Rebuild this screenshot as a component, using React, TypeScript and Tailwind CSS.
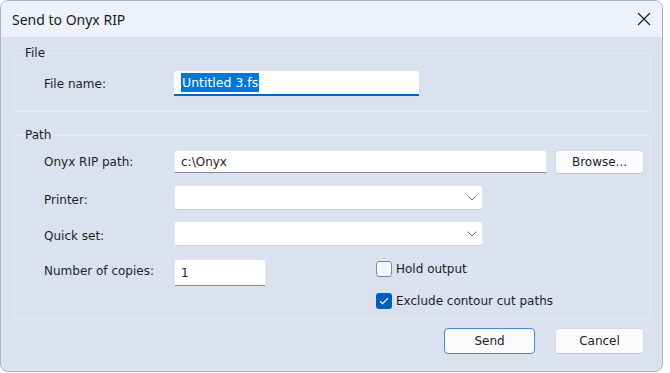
import React from "react";

const Chevron = () => (
  <svg width="10" height="6" viewBox="0 0 10 6" className="block">
    <path d="M0.5 0.5 L5 5 L9.5 0.5" fill="none" stroke="#6e727a" strokeWidth="1" />
  </svg>
);

const Combo = () => (
  <div className="w-[309px] h-[25px] bg-white border border-[#e2e5ec] border-b-[#cdd0d7] rounded-[3px] flex items-center justify-end pr-[5px]">
    <Chevron />
  </div>
);

export default function App() {
  return (
    <div className="w-[670px] h-[373px] bg-white font-['DejaVu_Sans',sans-serif] text-[12px] text-[#1e1e1e]">
      <div className="w-[663px] h-[372px] border border-[#aeb2ba] rounded-[8px] bg-[#dce1ef] overflow-hidden flex flex-col">
        <div className="h-[36px] shrink-0 bg-[#eef1f9] flex items-center justify-between pl-[11px] pr-[11px]">
          <span className="font-['Noto_Sans',sans-serif] text-[14px] text-[#1a1a1a]">Send to Onyx RIP</span>
          <svg width="14" height="14" viewBox="0 0 14 14" className="block">
            <path d="M1 1 L13 13 M13 1 L1 13" stroke="#1a1a1a" strokeWidth="1.1" fill="none" />
          </svg>
        </div>
        <div className="pl-[13px] pr-[11px] pt-[8px] flex flex-col">
          <fieldset className="border border-[#e7eaf3] rounded-[2px] pt-[10px] pb-[15px]">
            <legend className="ml-[10px] leading-[16px]">File</legend>
            <div className="flex items-center h-[25px] pl-[29px]">
              <div className="w-[130px]">File name:</div>
              <div className="w-[245px] h-[25px] bg-white rounded-t-[3px] border-b-2 border-[#0067c0] flex items-center pl-[7px]">
                <span className="bg-[#0078d7] text-white leading-[19px] px-[1px] text-[12.5px]">Untitled 3.fs</span>
              </div>
            </div>
          </fieldset>

          <fieldset className="mt-[15px] border border-[#e7eaf3] rounded-[2px] pt-[7px] pb-[7px]">
            <legend className="ml-[10px] leading-[16px]">Path</legend>
            <div className="pl-[29px]">
              <div className="flex items-center h-[24px]">
                <div className="w-[130px]">Onyx RIP path:</div>
                <div className="w-[373px] h-[23px] self-start bg-white rounded-t-[3px] border border-[#e4e7ee] border-b-[#868a93] flex items-center pl-[6px]">
                  c:\Onyx
                </div>
                <button className="ml-[8px] w-[89px] h-[24px] bg-[#fbfbfd] border border-[#d6d9e0] border-b-[#c3c6cd] rounded-[4px] flex items-center justify-center">
                  Browse...
                </button>
              </div>
              <div className="flex items-center h-[25px] mt-[11px]">
                <div className="w-[130px] pt-[5px]">Printer:</div>
                <Combo />
              </div>
              <div className="flex items-center h-[25px] mt-[11px]">
                <div className="w-[130px] pt-[5px]">Quick set:</div>
                <Combo />
              </div>
              <div className="flex mt-[13px]">
                <div className="flex items-center h-[27px]">
                  <div className="w-[130px] pb-[4px]">Number of copies:</div>
                  <div className="w-[92px] h-[27px] bg-white rounded-t-[3px] border border-[#e4e7ee] border-b-[#868a93] flex items-center pl-[6px]">
                    1
                  </div>
                </div>
                <div className="ml-[110px] flex flex-col gap-[12px]">
                  <div className="flex items-center h-[20px]">
                    <div className="w-[16px] h-[16px] rounded-[3px] bg-[#f4f5f8] border border-[#858991]" />
                    <span className="ml-[4px]">Hold output</span>
                  </div>
                  <div className="flex items-center h-[20px]">
                    <div className="w-[16px] h-[16px] rounded-[3px] bg-[#005fb8] flex items-center justify-center">
                      <svg width="10" height="8" viewBox="0 0 10 8" className="block">
                        <path d="M1 4.2 L3.6 6.6 L9 1.2" fill="none" stroke="white" strokeWidth="1.2" />
                      </svg>
                    </div>
                    <span className="ml-[4px]">Exclude contour cut paths</span>
                  </div>
                </div>
              </div>
            </div>
          </fieldset>

          <div className="mt-[9px] flex justify-end gap-[20px] pr-[7px]">
            <button className="w-[91px] h-[26px] bg-[#fbfbfd] border border-[#4a88d3] rounded-[4px] flex items-center justify-center">
              Send
            </button>
            <button className="w-[89px] h-[26px] bg-[#fbfbfd] border border-[#d6d9e0] border-b-[#c3c6cd] rounded-[4px] flex items-center justify-center">
              Cancel
            </button>
          </div>
        </div>
      </div>
    </div>
  );
}
